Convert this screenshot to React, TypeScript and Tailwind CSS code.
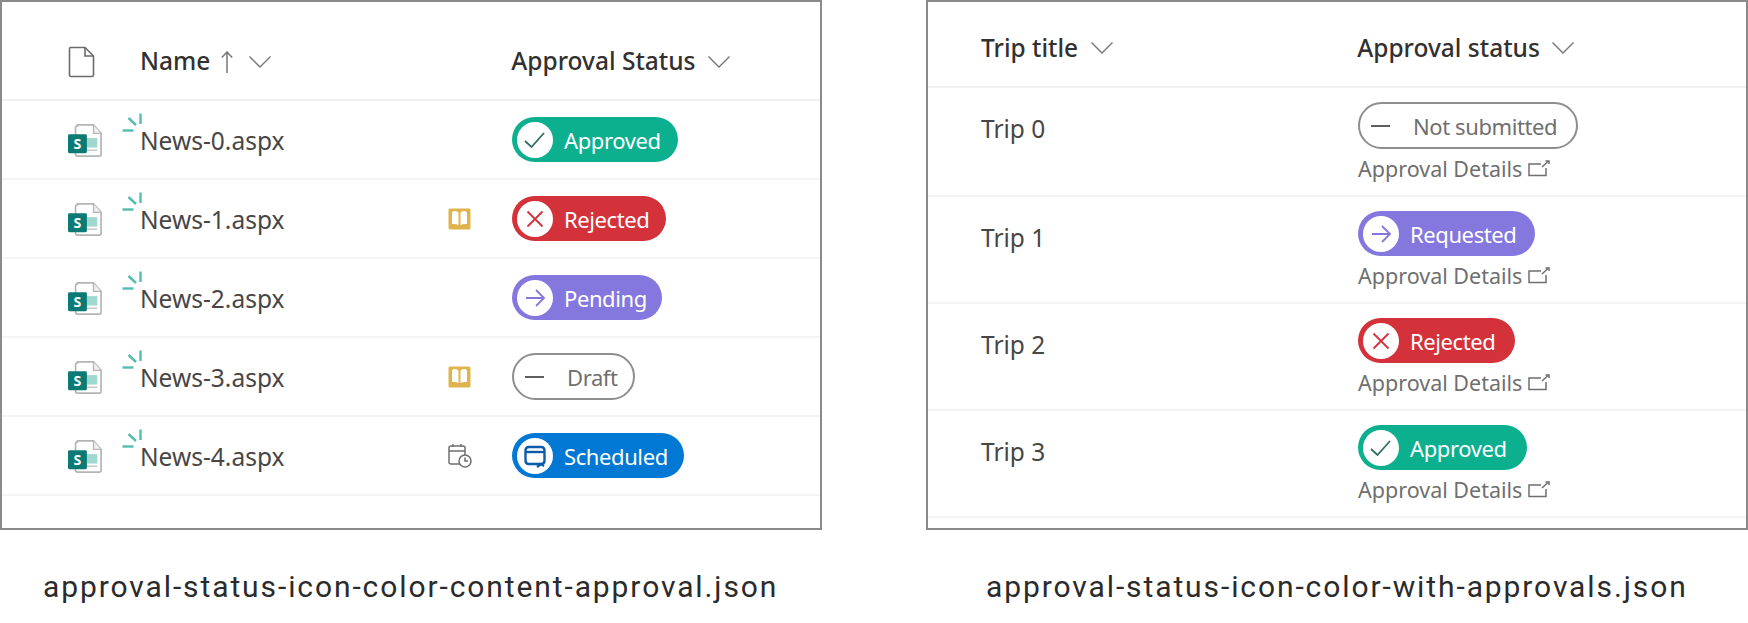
type Tone = "approved" | "rejected" | "pending" | "draft" | "scheduled";

const toneClass: Record<Tone, string> = {
  approved: "bg-[#0cb08f] text-white",
  rejected: "bg-[#d4323a] text-white",
  pending: "bg-[#8478de] text-white",
  draft: "bg-white text-[#6f6f6f] border-2 border-[#8e8e8e]",
  scheduled: "bg-[#0078d4] text-white",
};

function Chevron() {
  return (
    <svg width="24" height="14" viewBox="0 0 24 14" fill="none" stroke="#757575" strokeWidth="1.4">
      <path d="M1.5 1.5 L12 12 L22.5 1.5" />
    </svg>
  );
}

function SortArrow() {
  return (
    <svg width="12" height="22" viewBox="0 0 12 22" fill="none" stroke="#757575" strokeWidth="1.5">
      <path d="M6 1 V22 M0.8 6.5 L6 1 L11.2 6.5" />
    </svg>
  );
}

function StatusGlyph({ tone }: { tone: Tone }) {
  if (tone === "draft") {
    return (
      <span className="w-[36px] h-[36px] flex items-center justify-center">
        <svg width="22" height="4" viewBox="0 0 22 4">
          <rect x="1" y="1" width="19" height="2" fill="#5f5f5f" />
        </svg>
      </span>
    );
  }
  return (
    <span className="w-[36px] h-[36px] rounded-full bg-white flex items-center justify-center shrink-0">
      <svg width="24" height="24" viewBox="0 0 24 24" fill="none" strokeWidth="1.8">
        {tone === "approved" && <path d="M2 13 L8.5 19 L21 5" stroke="#2f6f63" />}
        {tone === "rejected" && <path d="M4.5 4.5 L19.5 19.5 M19.5 4.5 L4.5 19.5" stroke="#d4323a" />}
        {tone === "pending" && <path d="M3 12 H21 M13 4 L21 12 L13 20" stroke="#8478de" />}
        {tone === "scheduled" && (
          <g stroke="#0b5cab" strokeWidth="2.4">
            <path d="M18 20 H6 Q2.5 20 2.5 16.5 V6.5 Q2.5 3 6 3 H18 Q21.5 3 21.5 6.5 V16.5 Q21.5 20 18 20 Z" />
            <path d="M2.5 8 H21.5" />
            <path d="M14 23 L18 20 L21 22" />
          </g>
        )}
      </svg>
    </span>
  );
}

function Pill({ tone, label, width }: { tone: Tone; label: string; width: string }) {
  return (
    <div
      className={`${toneClass[tone]} ${width} ${tone === "draft" ? "h-[47px] pl-[3px]" : "h-[45px] pl-[5px]"} rounded-full flex items-center text-[22px] tracking-[-0.4px] leading-none`}
    >
      <StatusGlyph tone={tone} />
      <span className={tone === "draft" ? "ml-[14px]" : "ml-[11px]"}>{label}</span>
    </div>
  );
}

function PageIcon() {
  return (
    <svg width="27" height="32" viewBox="0 0 27 32" fill="none" stroke="#6b6b6b" strokeWidth="1.6">
      <path d="M2.5 1.5 H17 L25.5 10 V29 Q25.5 30.5 24 30.5 H3 Q1.5 30.5 1.5 29 V2.5 Q1.5 1.5 2.5 1.5 Z" />
      <path d="M17 1.5 V10 H25.5" />
    </svg>
  );
}

function SharePointIcon() {
  return (
    <svg width="34" height="34" viewBox="0 0 36 36">
      <path d="M10 3 Q8 3 8 5 V33 Q8 35 10 35 H33 Q35 35 35 33 V11 L27 2 H10 Z" fill="#fff" stroke="#b5b5b5" strokeWidth="1.8" />
      <path d="M27 2 V11 H35" fill="#f0f0f0" stroke="#b5b5b5" strokeWidth="1.4" />
      <rect x="16" y="16" width="15" height="10" fill="#9fd8cf" />
      <rect x="18" y="28" width="13" height="1.6" fill="#c9c9c9" />
      <rect x="0" y="12" width="20" height="20" rx="1.5" fill="#0b7a75" />
      <text x="10" y="27" textAnchor="middle" fontSize="15" fontWeight="700" fill="#fff" fontFamily="'Noto Sans', sans-serif">S</text>
    </svg>
  );
}

function NewBurst() {
  return (
    <svg className="absolute left-[-18px] top-[-7px]" width="22" height="22" viewBox="0 0 22 22" stroke="#53bdb2" strokeWidth="2.4" fill="none">
      <path d="M18.5 0.5 V11" />
      <path d="M6.5 5 L14 12" />
      <path d="M0.5 17.5 H11.5" />
    </svg>
  );
}

function BookIcon() {
  return (
    <svg width="23" height="22" viewBox="0 0 23 22">
      <path d="M2 0.5 H21 Q22.5 0.5 22.5 2 V20 Q22.5 21.5 21 21.5 H2 Q0.5 21.5 0.5 20 V2 Q0.5 0.5 2 0.5 Z" fill="#e0b44c" />
      <path d="M4 5 Q4 3 6.5 3 Q10.5 3 10.5 5.5 V17 Q8 15.5 4 16 Z M19 5 Q19 3 16.5 3 Q12.5 3 12.5 5.5 V17 Q15 15.5 19 16 Z" fill="#fff" />
    </svg>
  );
}

function CalendarClockIcon() {
  return (
    <svg width="24" height="24" viewBox="0 0 24 24" fill="none" stroke="#6f6f6f" strokeWidth="1.5">
      <path d="M12 20 H3 Q1 20 1 18 V4 Q1 2 3 2 H15 Q17 2 17 4 V11" />
      <path d="M1 7 H17 M5 0 V3 M13 0 V3" />
      <circle cx="17" cy="17" r="6" fill="#fff" />
      <path d="M17 13.5 V17 H20" />
    </svg>
  );
}

function ExternalIcon() {
  return (
    <svg width="22" height="18" viewBox="0 0 22 18" fill="none" stroke="#6f6f6f" strokeWidth="1.5">
      <path d="M13 4 H1 V15.5 H18 V8" />
      <path d="M14 7 L20 1.5" />
      <path d="M17.5 1 H21 V4" />
    </svg>
  );
}

const news: { name: string; tone: Tone; label: string; width: string; mark?: "book" | "calendar" }[] = [
  { name: "News-0.aspx", tone: "approved", label: "Approved", width: "w-[166px]" },
  { name: "News-1.aspx", tone: "rejected", label: "Rejected", width: "w-[154px]", mark: "book" },
  { name: "News-2.aspx", tone: "pending", label: "Pending", width: "w-[150px]" },
  { name: "News-3.aspx", tone: "draft", label: "Draft", width: "w-[123px]", mark: "book" },
  { name: "News-4.aspx", tone: "scheduled", label: "Scheduled", width: "w-[172px]", mark: "calendar" },
];

const trips: { title: string; tone: Tone; label: string; width: string; height: string }[] = [
  { title: "Trip 0", tone: "draft", label: "Not submitted", width: "w-[220px]", height: "h-[109px]" },
  { title: "Trip 1", tone: "pending", label: "Requested", width: "w-[177px]", height: "h-[107px]" },
  { title: "Trip 2", tone: "rejected", label: "Rejected", width: "w-[157px]", height: "h-[107px]" },
  { title: "Trip 3", tone: "approved", label: "Approved", width: "w-[169px]", height: "h-[107px]" },
];

function ContentApprovalTable() {
  return (
    <div className="h-[530px] border-2 border-[#8a8a8a]">
      <div className="h-[99px] flex items-center border-b-2 border-[#f1f1f1] pl-[66px] pt-[22px] text-[#323130] font-medium text-[24.5px]">
        <div className="w-[72px] flex"><PageIcon /></div>
        <span>Name</span>
        <span className="ml-[11px]"><SortArrow /></span>
        <span className="ml-[15px]"><Chevron /></span>
        <span className="ml-[239px]">Approval Status</span>
        <span className="ml-[11px]"><Chevron /></span>
      </div>
      {news.map((row) => (
        <div key={row.name} className="h-[79px] flex items-center border-b-2 border-[#f5f4f4] pl-[66px] text-[24.5px] text-[#484644]">
          <div className="w-[72px] flex"><SharePointIcon /></div>
          <div className="w-[304px] relative pt-[3px]">
            <NewBurst />
            {row.name}
          </div>
          <div className="w-[68px] flex pl-[4px]">
            {row.mark === "book" && <BookIcon />}
            {row.mark === "calendar" && <CalendarClockIcon />}
          </div>
          <Pill tone={row.tone} label={row.label} width={row.width} />
        </div>
      ))}
    </div>
  );
}

function TripApprovalTable() {
  return (
    <div className="h-[530px] border-2 border-[#8a8a8a]">
      <div className="h-[86px] flex items-center border-b-2 border-[#f1f1f1] pl-[53px] pt-[8px] text-[#323130] font-medium text-[24.5px]">
        <span>Trip title</span>
        <span className="ml-[12px]"><Chevron /></span>
        <span className="ml-[243px]">Approval status</span>
        <span className="ml-[11px]"><Chevron /></span>
      </div>
      {trips.map((row) => (
        <div key={row.title} className={`${row.height} flex border-b-2 border-[#f3f3f3] pl-[53px] text-[24.5px] text-[#484644]`}>
          <div className="w-[377px] pt-[23px]">{row.title}</div>
          <div className="pt-[14px]">
            <Pill tone={row.tone} label={row.label} width={row.width} />
            <div className="flex items-center gap-[6px] mt-[4px] text-[21.5px] text-[#6f6f6f]">
              Approval Details <ExternalIcon />
            </div>
          </div>
        </div>
      ))}
    </div>
  );
}

export default function App() {
  return (
    <div className="w-[1748px] h-[623px] bg-white grid grid-cols-[822px_822px] gap-x-[104px] font-['Noto_Sans',sans-serif]">
      <ContentApprovalTable />
      <TripApprovalTable />
      <p className="pl-[43px] pt-[20px] text-[30px] tracking-[1.9px] text-[#2b2b2b] font-['Roboto',sans-serif]">
        approval-status-icon-color-content-approval.json
      </p>
      <p className="pl-[60px] pt-[20px] text-[30px] tracking-[1.9px] text-[#2b2b2b] font-['Roboto',sans-serif]">
        approval-status-icon-color-with-approvals.json
      </p>
    </div>
  );
}
